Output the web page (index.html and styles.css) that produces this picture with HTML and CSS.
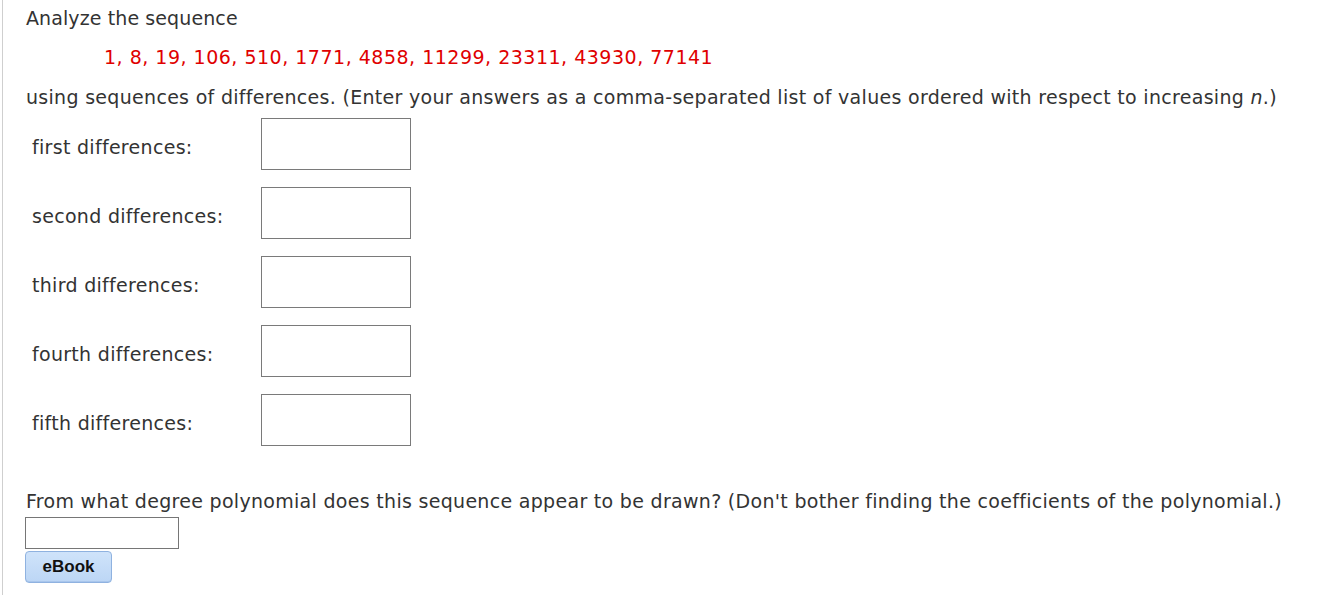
FILE: index.html
```html
<!DOCTYPE html>
<html>
<head>
<meta charset="utf-8">
<link rel="stylesheet" href="styles.css">
</head>
<body>
<div class="page">
  <p class="line first">Analyze the sequence</p>
  <p class="line seq">1, 8, 19, 106, 510, 1771, 4858, 11299, 23311, 43930, 77141</p>
  <p class="line">using sequences of differences. (Enter your answers as a comma-separated list of values ordered with respect to increasing <i>n</i>.)</p>
  <div class="rows">
    <div class="row"><span class="label">first differences:</span><textarea class="box"></textarea></div>
    <div class="row"><span class="label">second differences:</span><textarea class="box"></textarea></div>
    <div class="row"><span class="label">third differences:</span><textarea class="box"></textarea></div>
    <div class="row"><span class="label">fourth differences:</span><textarea class="box"></textarea></div>
    <div class="row"><span class="label">fifth differences:</span><textarea class="box"></textarea></div>
  </div>
  <p class="line question">From what degree polynomial does this sequence appear to be drawn? (Don't bother finding the coefficients of the polynomial.)</p>
  <input class="answer" type="text">
  <button class="ebook" type="button">eBook</button>
</div>
</body>
</html>
```
FILE: styles.css
```css
html, body {
  margin: 0;
  padding: 0;
  background: #fff;
}
.page {
  margin-left: 2px;
  border-left: 1px solid #cfcfcf;
  padding: 7px 0 0 22px;
  min-height: 595px;
  box-sizing: border-box;
  display: flex;
  flex-direction: column;
  align-items: flex-start;
  font-family: "DejaVu Sans", Verdana, sans-serif;
  font-size: 19px;
  letter-spacing: 0.3px;
  color: #333;
}
.line {
  margin: 0;
  line-height: 23px;
  padding-left: 1px;
}
.first {
  letter-spacing: 0.1px;
}
.seq {
  margin-top: 16px;
  padding-left: 79px;
  color: #e00000;
  letter-spacing: 0.5px;
}
.seq + .line {
  margin-top: 17px;
}
.rows {
  margin-top: 9px;
  display: flex;
  flex-direction: column;
  gap: 17px;
}
.row {
  display: flex;
  align-items: center;
  height: 52px;
}
.label {
  width: 236px;
  padding-left: 7px;
  padding-top: 5px;
  box-sizing: border-box;
}
.box {
  width: 150px;
  height: 52px;
  box-sizing: border-box;
  border: 1px solid #7a7a7a;
  margin: 0;
  padding: 0;
  resize: none;
  background: #fff;
}
.question {
  margin-top: 44px;
}
.answer {
  margin-top: 4px;
  width: 154px;
  height: 32px;
  box-sizing: border-box;
  border: 1px solid #767676;
  padding: 0;
  background: #fff;
}
.ebook {
  margin-top: 2px;
  width: 87px;
  height: 32px;
  box-sizing: border-box;
  border: 1px solid #8fb2e0;
  border-radius: 4px;
  background: linear-gradient(#cfe3fa, #bcd6f5);
  box-shadow: inset 0 -1px 0 #a9c6ec;
  font-family: "Liberation Sans", Arial, sans-serif;
  font-weight: bold;
  font-size: 17px;
  letter-spacing: 0;
  color: #111;
  padding: 0;
}
```
